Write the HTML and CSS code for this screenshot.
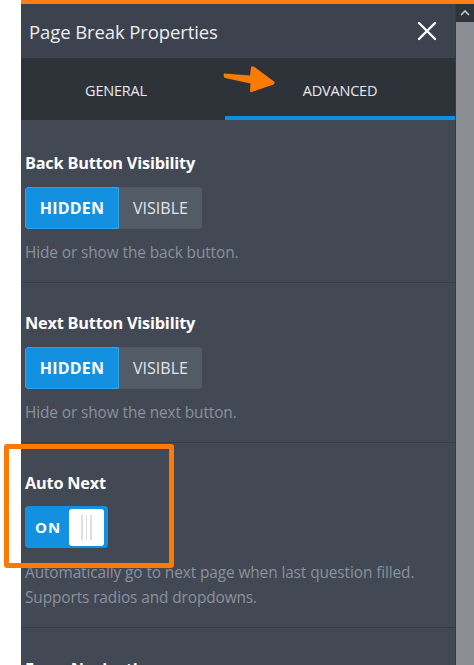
FILE: index.html
```html
<!DOCTYPE html>
<html>
<head>
<meta charset="utf-8">
<link rel="stylesheet" href="styles.css">
</head>
<body>
<div class="frame">
  <div class="topbar"></div>
  <div class="main">
    <div class="panel">
      <div class="header">
        <div class="title">Page Break Properties</div>
        <svg class="close" width="20" height="20" viewBox="0 0 20 20"><path d="M2 2L18 18M18 2L2 18" stroke="#fff" stroke-width="2.4" stroke-linecap="round"/></svg>
      </div>
      <div class="tabs">
        <div class="tab first-tab">GENERAL</div>
        <div class="tab active">ADVANCED</div>
        <svg class="arrow" width="54" height="28" viewBox="0 0 54 28"><path d="M1 8.5 L27 10.5 L28 2.5 Q29 0.5 31.5 2 L51 16.5 Q52.5 18 50.5 19.5 L29 27 Q27 27.8 27 25.5 L27.5 18.5 L2 13 Q0 12 1 8.5Z" fill="#ff7a00"/></svg>
      </div>
      <div class="section first">
        <div class="label">Back Button Visibility</div>
        <div class="seg">
          <div class="opt on">HIDDEN</div>
          <div class="opt off">VISIBLE</div>
        </div>
        <div class="desc">Hide or show the back button.</div>
      </div>
      <div class="section">
        <div class="label">Next Button Visibility</div>
        <div class="seg">
          <div class="opt on">HIDDEN</div>
          <div class="opt off">VISIBLE</div>
        </div>
        <div class="desc">Hide or show the next button.</div>
      </div>
      <div class="section third">
        <div class="label">Auto Next</div>
        <div class="toggle">
          <span class="toggle-text">ON</span>
          <span class="knob"><i></i><i></i><i></i></span>
        </div>
        <div class="desc">Automatically go to next page when last question filled. Supports radios and dropdowns.</div>
      </div>
      <div class="section last">
        <div class="label">Form Navigation</div>
      </div>
    </div>
    <div class="scrollbar">
      <div class="sb-up"><svg width="10" height="6" viewBox="0 0 10 6"><path d="M1 5L5 1L9 5" stroke="#c9ccd1" stroke-width="1.6" fill="none"/></svg></div>
      <div class="sb-track"></div>
    </div>
  </div>
</div>
<div class="highlight"></div>
</body>
</html>
```
FILE: styles.css
```css
html, body {
  margin: 0;
  padding: 0;
  background: #ffffff;
  height: 665px;
  overflow: hidden;
  font-family: "Open Sans", "Noto Sans", sans-serif;
}
.frame {
  margin-left: 21px;
  height: 665px;
  display: flex;
  flex-direction: column;
}
.topbar {
  height: 4px;
  background: #ff7f14;
  flex: none;
}
.main {
  flex: 1;
  display: flex;
  min-height: 0;
}
.panel {
  width: 435px;
  background: #424954;
  overflow: hidden;
  border-right: 1px solid #363b44;
  box-sizing: border-box;
}
.header {
  height: 54px;
  background: #3c434e;
  display: flex;
  align-items: center;
  justify-content: space-between;
  padding: 0 18px 0 8px;
}
.title {
  color: #eceef0;
  font-size: 18.5px;
  letter-spacing: -0.1px;
}
.close {
  display: block;
}
.tabs {
  position: relative;
  height: 62px;
  background: #2e333a;
  display: flex;
}
.tab {
  display: flex;
  align-items: center;
  justify-content: center;
  color: #e8eaed;
  font-size: 14.5px;
  letter-spacing: -0.2px;
  box-sizing: border-box;
  padding-top: 2px;
}
.tab.first-tab {
  width: 190px;
  margin-right: 14px;
}
.tab.active {
  flex: 1;
  border-bottom: 4px solid #0c91e0;
  padding-top: 6px;
}
.arrow {
  position: absolute;
  left: 202px;
  top: 7px;
}
.section {
  padding: 30px 4px 17px 4px;
  border-top: 1px solid #373d47;
}
.section.first {
  border-top: none;
  padding-top: 33px;
}
.section.last {
  padding-top: 31px;
}
.label {
  color: #ffffff;
  font-weight: 700;
  font-size: 16.3px;
  line-height: 20px;
  letter-spacing: -0.2px;
}
.seg {
  margin-top: 14px;
  display: flex;
  height: 42px;
}
.opt {
  display: flex;
  align-items: center;
  justify-content: center;
  font-size: 16px;
  box-sizing: border-box;
}
.opt.on {
  width: 94px;
  background: #1391e0;
  border: 1px solid #2ea3ee;
  border-radius: 3px 0 0 3px;
  color: #ffffff;
  font-weight: 700;
  letter-spacing: 0.2px;
}
.opt.off {
  width: 83px;
  background: #535b67;
  border-radius: 0 3px 3px 0;
  color: #e2e5e9;
}
.desc {
  margin-top: 11px;
  color: #8a919c;
  font-size: 15.4px;
  line-height: 25px;
  letter-spacing: -0.1px;
}
.third .desc {
  margin-top: 12px;
}
.toggle {
  margin-top: 13px;
  width: 83px;
  height: 42px;
  background: #1391e0;
  border-radius: 4px;
  display: flex;
  align-items: center;
  justify-content: space-between;
  padding: 0 4px 0 10px;
  box-sizing: border-box;
}
.toggle-text {
  color: #ffffff;
  font-weight: 700;
  font-size: 15px;
  letter-spacing: 1px;
}
.knob {
  width: 35px;
  height: 37px;
  background: #ffffff;
  border-radius: 3px;
  display: flex;
  justify-content: center;
  align-items: center;
  gap: 3px;
}
.knob i {
  display: block;
  width: 1.5px;
  height: 25px;
  background: #dcdee1;
}
.scrollbar {
  width: 18px;
  display: flex;
  flex-direction: column;
}
.sb-up {
  height: 18px;
  background: #30353d;
  display: flex;
  align-items: center;
  justify-content: center;
}
.sb-track {
  flex: 1;
  background: #8a8d94;
}
.highlight {
  position: absolute;
  left: 4px;
  top: 444px;
  width: 170px;
  height: 124px;
  box-sizing: border-box;
  border: 5px solid #ff7a00;
  border-radius: 3px;
}
```
